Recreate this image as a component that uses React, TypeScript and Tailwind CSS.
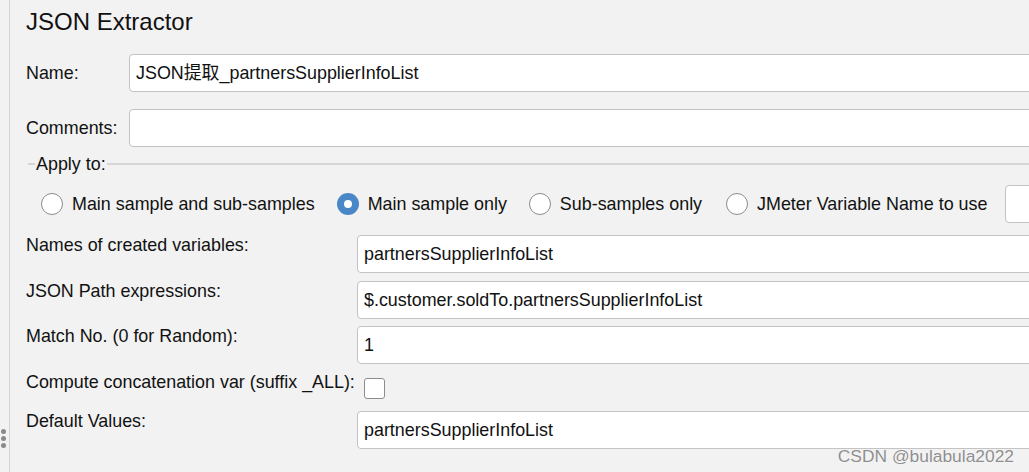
import React from "react";

const FONT = '"Liberation Sans", Arial, "Noto Sans CJK SC", sans-serif';

function Field({ value, className = "" }: { value?: string; className?: string }) {
  return (
    <div
      className={
        "h-[38px] bg-white border border-[#c3c3c3] rounded-[4px] flex items-center pl-[6px] text-[17.9px] text-[#111] whitespace-nowrap overflow-hidden " +
        className
      }
    >
      {value}
    </div>
  );
}

function Radio({ checked }: { checked?: boolean }) {
  if (checked) {
    return (
      <span className="w-[22px] h-[22px] rounded-full bg-[#4a87c7] flex items-center justify-center shrink-0">
        <span className="w-[8px] h-[8px] rounded-full bg-white" />
      </span>
    );
  }
  return <span className="w-[22px] h-[22px] rounded-full bg-white border border-[#8c8c8c] shrink-0" />;
}

function RadioOption({ label, checked }: { label: string; checked?: boolean }) {
  return (
    <div className="flex items-center gap-[9px]">
      <Radio checked={checked} />
      <span className="whitespace-nowrap">{label}</span>
    </div>
  );
}

function Row({ label, children, className = "" }: { label: string; children: React.ReactNode; className?: string }) {
  return (
    <div className={"flex items-start " + className}>
      <div className="w-[331px] shrink-0 leading-[20px] whitespace-nowrap">{label}</div>
      {children}
    </div>
  );
}

export default function App() {
  return (
    <div
      className="w-[1029px] h-[472px] bg-[#f2f2f2] overflow-hidden relative flex text-[17.9px] text-[#111]"
      style={{ fontFamily: FONT }}
    >
      {/* split-pane edge with drag grip */}
      <div className="w-[10px] shrink-0 border-r border-[#d3d3d3] flex flex-col justify-end items-start pl-[1px] pb-[24px] gap-[2px]">
        <span className="w-[5px] h-[5px] rounded-full bg-[#8a8a8a]" />
        <span className="w-[5px] h-[5px] rounded-full bg-[#8a8a8a]" />
        <span className="w-[5px] h-[5px] rounded-full bg-[#8a8a8a]" />
      </div>

      <div className="flex-1 pl-[16px] mr-[-14px] flex flex-col">
        <div className="mt-[8px] text-[24px] leading-[28px]">JSON Extractor</div>

        <div className="mt-[18px] flex items-center">
          <div className="w-[103px] shrink-0">Name:</div>
          <Field value="JSON提取_partnersSupplierInfoList" className="flex-1" />
        </div>

        <div className="mt-[17px] flex items-center">
          <div className="w-[103px] shrink-0">Comments:</div>
          <Field className="flex-1" />
        </div>

        {/* titled border: Apply to */}
        <div className="mt-[7px] ml-[2px] flex items-center h-[20px] leading-[20px]">
          <span className="w-[7px] h-[2px] bg-[#d6d6d6]" />
          <span className="px-[1px]">Apply to:</span>
          <span className="flex-1 h-[2px] bg-[#d6d6d6]" />
        </div>

        <div className="mt-[11px] ml-[15px] h-[38px] flex items-center gap-[22px]">
          <RadioOption label="Main sample and sub-samples" />
          <RadioOption label="Main sample only" checked />
          <RadioOption label="Sub-samples only" />
          <div className="ml-[2px] flex items-center gap-[18px]">
            <RadioOption label="JMeter Variable Name to use" />
            <Field className="w-[60px]" />
          </div>
        </div>

        <Row label="Names of created variables:" className="mt-[12px]">
          <Field value="partnersSupplierInfoList" className="flex-1" />
        </Row>
        <Row label="JSON Path expressions:" className="mt-[8px]">
          <Field value="$.customer.soldTo.partnersSupplierInfoList" className="flex-1" />
        </Row>
        <Row label="Match No. (0 for Random):" className="mt-[7px]">
          <Field value="1" className="flex-1" />
        </Row>
        <Row label="Compute concatenation var (suffix _ALL):" className="mt-[8px] h-[31px]">
          <span className="mt-[6px] ml-[7px] w-[21px] h-[21px] bg-white border border-[#8c8c8c] rounded-[3px]" />
        </Row>
        <Row label="Default Values:" className="mt-[8px]">
          <Field value="partnersSupplierInfoList" className="flex-1" />
        </Row>
      </div>

      <div
        className="absolute right-[15px] bottom-[6px] text-[17.4px] leading-[20px] text-[#8f8f8f] whitespace-nowrap"
        style={{ textShadow: "0 0 1px #ffffff" }}
      >
        CSDN @bulabula2022
      </div>
    </div>
  );
}
